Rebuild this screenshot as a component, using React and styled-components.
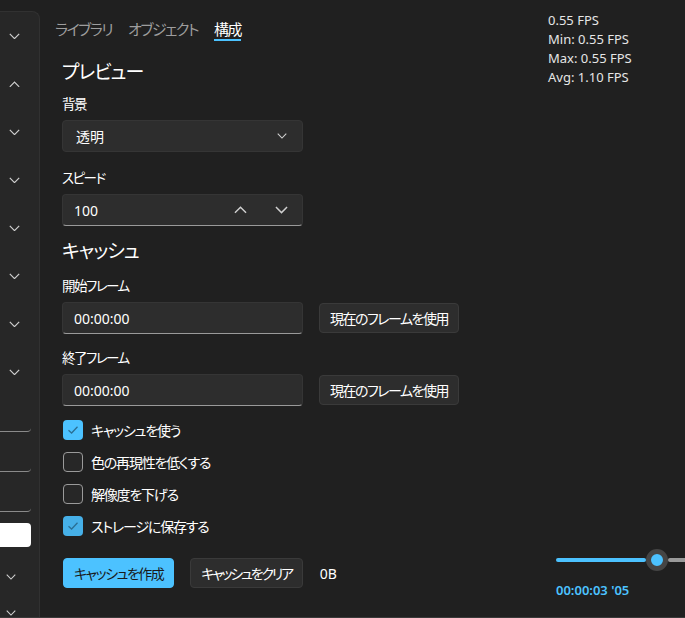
import React from 'react'
import styled, { createGlobalStyle } from 'styled-components'

const GlobalStyle = createGlobalStyle`
  html, body { margin: 0; padding: 0; background: #202020; }
  body {
    font-family: "Noto Sans", "Noto Sans CJK JP", sans-serif;
    font-feature-settings: "palt";
    color: #ffffff;
  }
`

const Chevron = ({ up, size = 11 }) => (
  <svg width={size} height={size * 0.6} viewBox="0 0 11 6.6">
    <polyline
      points={up ? '0.8,5.8 5.5,1 10.2,5.8' : '0.8,0.8 5.5,5.6 10.2,0.8'}
      fill="none"
      stroke="#d0d0d0"
      strokeWidth="1.2"
    />
  </svg>
)

const Check = () => (
  <svg width="12" height="10" viewBox="0 0 12 10">
    <polyline points="1.5,5.2 4.6,8 10.5,1.8" fill="none" stroke="#2a6f94" strokeWidth="1.3" />
  </svg>
)

export default function App() {
  return (
    <>
      <GlobalStyle />
      <Page>
        <Sidebar>
          {[false, true, false, false, false, false, false, false].map((up, i) => (
            <SideRow key={i}><Chevron up={up} /></SideRow>
          ))}
          <SideInputs>
            <SideInput />
            <SideInput />
            <SideInput />
          </SideInputs>
          <SideWhite />
          <SideSmalls>
            <SideSmall><Chevron size={10} /></SideSmall>
            <SideSmall><Chevron size={10} /></SideSmall>
          </SideSmalls>
        </Sidebar>

        <Settings>
          <Tabs>
            <Tab>ライブラリ</Tab>
            <Tab>オブジェクト</Tab>
            <Tab active>構成</Tab>
          </Tabs>

          <Content>
            <Heading>プレビュー</Heading>
            <Label top={8}>背景</Label>
            <Select>
              <span>透明</span>
              <Chevron size={10} />
            </Select>

            <Label top={16}>スピード</Label>
            <NumberBox>
              <span>100</span>
              <Spin>
                <Chevron up size={13} />
                <Chevron size={13} />
              </Spin>
            </NumberBox>

            <Heading top={11}>キャッシュ</Heading>
            <Label top={11}>開始フレーム</Label>
            <FieldRow>
              <TextBox>00:00:00</TextBox>
              <Button>現在のフレームを使用</Button>
            </FieldRow>

            <Label top={14}>終了フレーム</Label>
            <FieldRow>
              <TextBox>00:00:00</TextBox>
              <Button>現在のフレームを使用</Button>
            </FieldRow>

            <Checks>
              <CheckRow><Box checked><Check /></Box>キャッシュを使う</CheckRow>
              <CheckRow><Box />色の再現性を低くする</CheckRow>
              <CheckRow><Box />解像度を下げる</CheckRow>
              <CheckRow><Box checked dim><Check /></Box>ストレージに保存する</CheckRow>
            </Checks>

            <Actions>
              <Button primary>キャッシュを作成</Button>
              <Button tight>キャッシュをクリア</Button>
              <Size>0B</Size>
            </Actions>
          </Content>
        </Settings>

        <RightPane>
          <Fps>
            <div>0.55 FPS</div>
            <div>Min: 0.55 FPS</div>
            <div>Max: 0.55 FPS</div>
            <div>Avg: 1.10 FPS</div>
          </Fps>
          <Timeline>
            <Slider>
              <Filled />
              <Thumb />
              <Rest />
            </Slider>
            <Time>00:00:03 '05</Time>
          </Timeline>
        </RightPane>
      </Page>
    </>
  )
}

const Page = styled.div`
  width: 685px;
  height: 618px;
  display: flex;
  overflow: hidden;
  background: #202020;
  box-sizing: border-box;
  border-bottom: 1px solid #3a3a3a;
`

const Sidebar = styled.div`
  width: 40px;
  flex-shrink: 0;
  margin-top: 11px;
  background: #272727;
  border-right: 1px solid #313131;
  border-top: 1px solid #313131;
  border-top-right-radius: 8px;
  display: flex;
  flex-direction: column;
  box-sizing: border-box;
  overflow: hidden;
  & > * { flex-shrink: 0; }
`

const SideRow = styled.div`
  height: 48px;
  display: flex;
  align-items: center;
  padding-left: 9px;
`

const SideInputs = styled.div`
  display: flex;
  flex-direction: column;
  gap: 8px;
  margin-top: 4px;
`

const SideInput = styled.div`
  width: 31px;
  height: 32px;
  flex-shrink: 0;
  box-sizing: border-box;
  border-bottom: 1px solid #8a8a8a;
  border-bottom-right-radius: 4px;
`

const SideWhite = styled.div`
  width: 31px;
  height: 24px;
  margin-top: 11px;
  background: #ffffff;
  border-top-right-radius: 4px;
  border-bottom-right-radius: 4px;
`

const SideSmalls = styled.div`
  margin-top: 12px;
  display: flex;
  flex-direction: column;
`

const SideSmall = styled.div`
  height: 36px;
  flex-shrink: 0;
  display: flex;
  align-items: center;
  padding-left: 6px;
`

const Settings = styled.div`
  width: 500px;
  flex-shrink: 0;
  display: flex;
  flex-direction: column;
`

const Tabs = styled.div`
  display: flex;
  gap: 16px;
  padding: 19px 0 0 15px;
  height: 23px;
`

const Tab = styled.div`
  font-size: 15px;
  line-height: 20px;
  height: 20px;
  letter-spacing: -1.5px;
  color: ${p => (p.active ? '#ffffff' : '#9d9d9d')};
  border-bottom: 2px solid ${p => (p.active ? '#4cc2ff' : 'transparent')};
`

const Content = styled.div`
  display: flex;
  flex-direction: column;
  align-items: flex-start;
  padding: 16px 0 0 22px;
`

const Heading = styled.div`
  font-size: 19px;
  line-height: 28px;
  letter-spacing: -1px;
  margin-top: ${p => p.top || 0}px;
`

const Label = styled.div`
  font-size: 13.5px;
  line-height: 20px;
  letter-spacing: -1.5px;
  margin-top: ${p => p.top || 5}px;
  margin-bottom: 6px;
`

const Field = styled.div`
  width: 241px;
  height: 32px;
  box-sizing: border-box;
  background: #2d2d2d;
  border: 1px solid #353535;
  border-radius: 4px;
  display: flex;
  align-items: center;
  font-size: 14px;
`

const Select = styled(Field)`
  justify-content: space-between;
  padding: 0 15px 0 13px;
`

const NumberBox = styled(Field)`
  justify-content: space-between;
  padding: 0 14px 0 11px;
  border-bottom: 1px solid #9a9a9a;
`

const Spin = styled.div`
  display: flex;
  gap: 28px;
  align-items: center;
`

const FieldRow = styled.div`
  display: flex;
  align-items: center;
  gap: 16px;
`

const TextBox = styled(Field)`
  padding: 0 11px;
  border-bottom: 1px solid #9a9a9a;
`

const Button = styled.div`
  height: 30px;
  box-sizing: border-box;
  padding: 0 10px;
  display: flex;
  align-items: center;
  font-size: 14px;
  letter-spacing: ${p => (p.tight ? '-2.2px' : '-1.5px')};
  border-radius: 4px;
  background: ${p => (p.primary ? '#4cc2ff' : '#2d2d2d')};
  color: ${p => (p.primary ? '#1a1a1a' : '#ffffff')};
  border: 1px solid ${p => (p.primary ? '#4cc2ff' : '#3a3a3a')};
`

const Checks = styled.div`
  display: flex;
  flex-direction: column;
  margin-top: 8px;
`

const CheckRow = styled.div`
  height: 32px;
  display: flex;
  align-items: center;
  gap: 8px;
  font-size: 14px;
  letter-spacing: -1.2px;
  padding-left: 1px;
`

const Box = styled.div`
  width: 20px;
  height: 20px;
  box-sizing: border-box;
  border-radius: 4px;
  display: flex;
  align-items: center;
  justify-content: center;
  background: ${p => (p.checked ? (p.dim ? '#46b0e8' : '#4cc2ff') : '#272727')};
  border: 1px solid ${p => (p.checked ? 'transparent' : '#9a9a9a')};
`

const Actions = styled.div`
  display: flex;
  align-items: center;
  gap: 16px;
  margin-top: 16px;
  padding-left: 1px;
`

const Size = styled.div`
  font-size: 14px;
  margin-left: 1px;
`

const RightPane = styled.div`
  flex: 1;
  display: flex;
  flex-direction: column;
  justify-content: space-between;
  min-width: 0;
`

const Fps = styled.div`
  padding: 11px 0 0 8px;
  font-size: 13px;
  line-height: 19px;
  color: #e6e6e6;
`

const Timeline = styled.div`
  padding: 0 0 18px 16px;
`

const Slider = styled.div`
  display: flex;
  align-items: center;
  height: 22px;
  width: 200px;
`

const Filled = styled.div`
  width: 90px;
  height: 4px;
  border-radius: 2px;
  background: #4cc2ff;
`

const Thumb = styled.div`
  width: 22px;
  height: 22px;
  box-sizing: border-box;
  border-radius: 50%;
  background: #4cc2ff;
  border: 5px solid #454545;
  flex-shrink: 0;
`

const Rest = styled.div`
  flex: 1;
  height: 4px;
  border-radius: 2px;
  background: #9a9a9a;
`

const Time = styled.div`
  margin-top: 10px;
  font-size: 13px;
  font-weight: 600;
  color: #4cc2ff;
`
